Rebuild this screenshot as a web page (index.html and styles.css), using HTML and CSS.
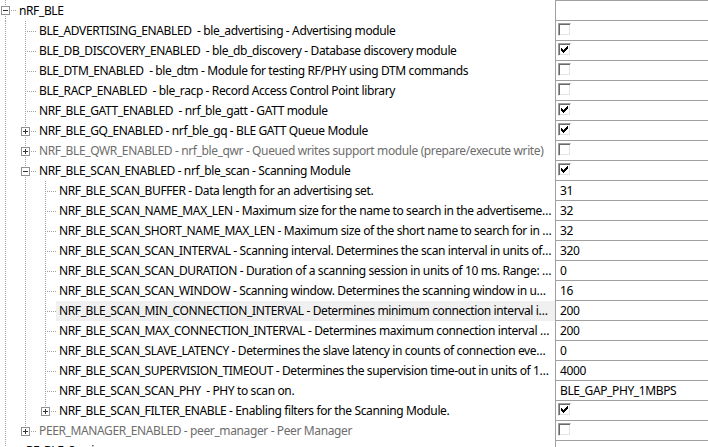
FILE: index.html
```html
<!DOCTYPE html>
<html>
<head>
<meta charset="utf-8">
<link rel="stylesheet" href="styles.css">
</head>
<body>
<div class="grid">
  <div class="row first">
    <div class="tree"><span class="tw mid"><span class="box minus"></span></span><span class="lbl">nRF_BLE</span></div>
    <div class="val"></div>
  </div>
  <div class="row">
    <div class="tree"><span class="g on"></span><span class="tw mid"></span><span class="lbl">BLE_ADVERTISING_ENABLED  - ble_advertising - Advertising module</span></div>
    <div class="val"><span class="cb"></span></div>
  </div>
  <div class="row">
    <div class="tree"><span class="g on"></span><span class="tw mid"></span><span class="lbl">BLE_DB_DISCOVERY_ENABLED  - ble_db_discovery - Database discovery module</span></div>
    <div class="val"><span class="cb"><svg width="7" height="7" viewBox="0 0 7 7" shape-rendering="crispEdges"><path d="M6 0h1v1h-1z M5 1h2v1h-2z M0 2h1v1h-1z M4 2h3v1h-3z M0 3h2v1h-2z M3 3h3v1h-3z M0 4h5v1h-5z M1 5h3v1h-3z M2 6h1v1h-1z"/></svg></span></div>
  </div>
  <div class="row">
    <div class="tree"><span class="g on"></span><span class="tw mid"></span><span class="lbl">BLE_DTM_ENABLED  - ble_dtm - Module for testing RF/PHY using DTM commands</span></div>
    <div class="val"><span class="cb"></span></div>
  </div>
  <div class="row">
    <div class="tree"><span class="g on"></span><span class="tw mid"></span><span class="lbl">BLE_RACP_ENABLED  - ble_racp - Record Access Control Point library</span></div>
    <div class="val"><span class="cb"></span></div>
  </div>
  <div class="row">
    <div class="tree"><span class="g on"></span><span class="tw mid"></span><span class="lbl">NRF_BLE_GATT_ENABLED  - nrf_ble_gatt - GATT module</span></div>
    <div class="val"><span class="cb"><svg width="7" height="7" viewBox="0 0 7 7" shape-rendering="crispEdges"><path d="M6 0h1v1h-1z M5 1h2v1h-2z M0 2h1v1h-1z M4 2h3v1h-3z M0 3h2v1h-2z M3 3h3v1h-3z M0 4h5v1h-5z M1 5h3v1h-3z M2 6h1v1h-1z"/></svg></span></div>
  </div>
  <div class="row">
    <div class="tree"><span class="g on"></span><span class="tw mid"><span class="box plus"></span></span><span class="lbl">NRF_BLE_GQ_ENABLED - nrf_ble_gq - BLE GATT Queue Module</span></div>
    <div class="val"><span class="cb"><svg width="7" height="7" viewBox="0 0 7 7" shape-rendering="crispEdges"><path d="M6 0h1v1h-1z M5 1h2v1h-2z M0 2h1v1h-1z M4 2h3v1h-3z M0 3h2v1h-2z M3 3h3v1h-3z M0 4h5v1h-5z M1 5h3v1h-3z M2 6h1v1h-1z"/></svg></span></div>
  </div>
  <div class="row">
    <div class="tree"><span class="g on"></span><span class="tw mid"><span class="box plus"></span></span><span class="lbl dis">NRF_BLE_QWR_ENABLED - nrf_ble_qwr - Queued writes support module (prepare/execute write)</span></div>
    <div class="val"><span class="cb"></span></div>
  </div>
  <div class="row">
    <div class="tree"><span class="g on"></span><span class="tw mid"><span class="box minus"></span></span><span class="lbl">NRF_BLE_SCAN_ENABLED - nrf_ble_scan - Scanning Module</span></div>
    <div class="val"><span class="cb"><svg width="7" height="7" viewBox="0 0 7 7" shape-rendering="crispEdges"><path d="M6 0h1v1h-1z M5 1h2v1h-2z M0 2h1v1h-1z M4 2h3v1h-3z M0 3h2v1h-2z M3 3h3v1h-3z M0 4h5v1h-5z M1 5h3v1h-3z M2 6h1v1h-1z"/></svg></span></div>
  </div>
  <div class="row">
    <div class="tree"><span class="g on"></span><span class="g on"></span><span class="tw mid"></span><span class="lbl">NRF_BLE_SCAN_BUFFER - Data length for an advertising set.</span></div>
    <div class="val"><span class="num">31</span></div>
  </div>
  <div class="row">
    <div class="tree"><span class="g on"></span><span class="g on"></span><span class="tw mid"></span><span class="lbl">NRF_BLE_SCAN_NAME_MAX_LEN - Maximum size for the name to search in the advertisement report.</span></div>
    <div class="val"><span class="num">32</span></div>
  </div>
  <div class="row">
    <div class="tree"><span class="g on"></span><span class="g on"></span><span class="tw mid"></span><span class="lbl">NRF_BLE_SCAN_SHORT_NAME_MAX_LEN - Maximum size of the short name to search for in the advertisement report.</span></div>
    <div class="val"><span class="num">32</span></div>
  </div>
  <div class="row">
    <div class="tree"><span class="g on"></span><span class="g on"></span><span class="tw mid"></span><span class="lbl">NRF_BLE_SCAN_SCAN_INTERVAL - Scanning interval. Determines the scan interval in units of 0.625 millisecond.</span></div>
    <div class="val"><span class="num">320</span></div>
  </div>
  <div class="row">
    <div class="tree"><span class="g on"></span><span class="g on"></span><span class="tw mid"></span><span class="lbl">NRF_BLE_SCAN_SCAN_DURATION - Duration of a scanning session in units of 10 ms. Range: 0x0001 - 0xFFFF (10 ms to 10.9225 ms).</span></div>
    <div class="val"><span class="num">0</span></div>
  </div>
  <div class="row">
    <div class="tree"><span class="g on"></span><span class="g on"></span><span class="tw mid"></span><span class="lbl">NRF_BLE_SCAN_SCAN_WINDOW - Scanning window. Determines the scanning window in units of 0.625 millisecond.</span></div>
    <div class="val"><span class="num">16</span></div>
  </div>
  <div class="row sel">
    <div class="tree"><span class="g on"></span><span class="g on"></span><span class="tw mid"></span><span class="lbl">NRF_BLE_SCAN_MIN_CONNECTION_INTERVAL - Determines minimum connection interval in milliseconds.</span></div>
    <div class="val"><span class="num">200</span></div>
  </div>
  <div class="row">
    <div class="tree"><span class="g on"></span><span class="g on"></span><span class="tw mid"></span><span class="lbl">NRF_BLE_SCAN_MAX_CONNECTION_INTERVAL - Determines maximum connection interval in milliseconds.</span></div>
    <div class="val"><span class="num">200</span></div>
  </div>
  <div class="row">
    <div class="tree"><span class="g on"></span><span class="g on"></span><span class="tw mid"></span><span class="lbl">NRF_BLE_SCAN_SLAVE_LATENCY - Determines the slave latency in counts of connection events.</span></div>
    <div class="val"><span class="num">0</span></div>
  </div>
  <div class="row">
    <div class="tree"><span class="g on"></span><span class="g on"></span><span class="tw mid"></span><span class="lbl">NRF_BLE_SCAN_SUPERVISION_TIMEOUT - Determines the supervision time-out in units of 10 millisecond.</span></div>
    <div class="val"><span class="num">4000</span></div>
  </div>
  <div class="row">
    <div class="tree"><span class="g on"></span><span class="g on"></span><span class="tw mid"></span><span class="lbl">NRF_BLE_SCAN_SCAN_PHY  - PHY to scan on.</span></div>
    <div class="val"><span class="num">BLE_GAP_PHY_1MBPS</span></div>
  </div>
  <div class="row">
    <div class="tree"><span class="g on"></span><span class="g on"></span><span class="tw last"><span class="box plus"></span></span><span class="lbl">NRF_BLE_SCAN_FILTER_ENABLE - Enabling filters for the Scanning Module.</span></div>
    <div class="val"><span class="cb"><svg width="7" height="7" viewBox="0 0 7 7" shape-rendering="crispEdges"><path d="M6 0h1v1h-1z M5 1h2v1h-2z M0 2h1v1h-1z M4 2h3v1h-3z M0 3h2v1h-2z M3 3h3v1h-3z M0 4h5v1h-5z M1 5h3v1h-3z M2 6h1v1h-1z"/></svg></span></div>
  </div>
  <div class="row">
    <div class="tree"><span class="g on"></span><span class="tw last"><span class="box plus"></span></span><span class="lbl dis">PEER_MANAGER_ENABLED - peer_manager - Peer Manager</span></div>
    <div class="val"><span class="cb"></span></div>
  </div>
  <div class="row">
    <div class="tree"><span class="tw mid"><span class="box plus"></span></span><span class="lbl">nRF_BLE_Services</span></div>
    <div class="val"></div>
  </div>
</div>
</body>
</html>
```
FILE: styles.css
```css
html, body {
  margin: 0;
  padding: 0;
  background: #fff;
}
body {
  font-family: "Noto Sans", sans-serif;
  font-size: 12px;
  color: #000;
  overflow: hidden;
}
.grid {
  display: flex;
  flex-direction: column;
  width: 708px;
}
.row {
  display: flex;
  height: 20px;
  flex: none;
}
.row.first {
  height: 21px;
}
.tree {
  width: 555px;
  flex: none;
  display: flex;
  align-items: stretch;
  overflow: hidden;
}
.g {
  width: 20px;
  flex: none;
}
.g.on {
  background: repeating-linear-gradient(to bottom, #a0a0a0 0 1px, transparent 1px 2px) 5px 0 / 1px 100% no-repeat;
}
.tw {
  width: 16px;
  flex: none;
  display: flex;
  align-items: flex-start;
}
.tw.mid {
  background:
    repeating-linear-gradient(to right, #a0a0a0 0 1px, transparent 1px 2px) 7px 10px / 9px 1px no-repeat,
    repeating-linear-gradient(to bottom, #a0a0a0 0 1px, transparent 1px 2px) 5px 0 / 1px 100% no-repeat;
}
.tw.last {
  background:
    repeating-linear-gradient(to right, #a0a0a0 0 1px, transparent 1px 2px) 7px 10px / 9px 1px no-repeat,
    repeating-linear-gradient(to bottom, #a0a0a0 0 1px, transparent 1px 2px) 5px 0 / 1px 10px no-repeat;
}
.box {
  width: 9px;
  height: 9px;
  box-sizing: border-box;
  border: 1px solid #919191;
  background: #fff;
  margin: 6px 0 0 1px;
  position: relative;
}
.box::before {
  content: "";
  position: absolute;
  left: 1px;
  top: 3px;
  width: 5px;
  height: 1px;
  background: #333;
}
.box.plus::after {
  content: "";
  position: absolute;
  left: 3px;
  top: 1px;
  width: 1px;
  height: 5px;
  background: #333;
}
.lbl {
  flex: 1;
  min-width: 0;
  padding: 0 3px 0 3px;
  line-height: 20px;
  letter-spacing: -0.38px;
  white-space: pre;
  overflow: hidden;
  text-overflow: ellipsis;
}
.row.first .lbl {
  line-height: 21px;
}
.row.sel .lbl {
  background: #f0f0f0;
}
.dis {
  color: #6d6d6d;
}
.val {
  flex: 1;
  box-sizing: border-box;
  border-left: 1px solid #a0a0a0;
  border-bottom: 1px solid #a0a0a0;
}
.row.first .val {
  border-top: 1px solid #a0a0a0;
}
.num {
  display: block;
  padding-left: 4px;
  line-height: 19px;
  letter-spacing: -0.38px;
  white-space: nowrap;
}
.cb {
  display: block;
  width: 13px;
  height: 13px;
  box-sizing: border-box;
  margin: 2px 0 0 2px;
  border: 1px solid;
  border-color: #a0a0a0 #fff #fff #a0a0a0;
  box-shadow: inset 1px 1px 0 #696969, inset -1px -1px 0 #e3e3e3;
  background: #fff;
  padding: 2px 0 0 2px;
}
.cb svg {
  display: block;
  fill: #000;
}
```
